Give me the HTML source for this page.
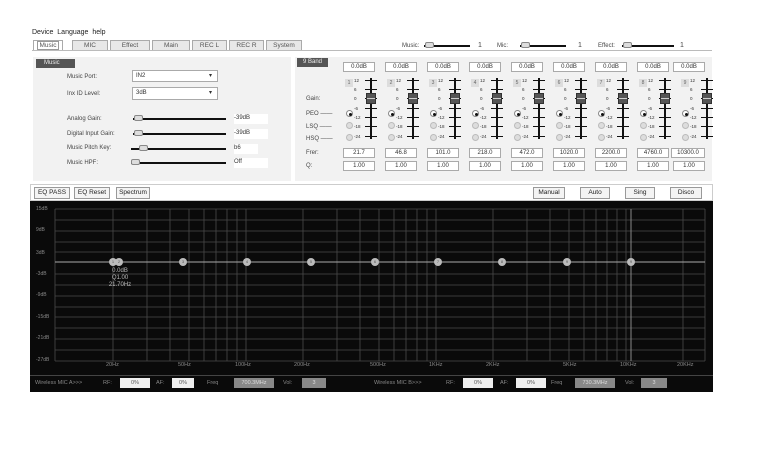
<!DOCTYPE html>
<html><head><meta charset="utf-8"><style>
*{margin:0;padding:0;box-sizing:border-box}
body{width:760px;height:449px;background:#fff;position:relative;overflow:hidden;font-family:"Liberation Sans",sans-serif;font-size:6px;color:#333}
.a{position:absolute}
.box{position:absolute;background:#fff;border:1px solid #aaa;text-align:center;font-size:6px;line-height:8px;color:#333}
.tab{position:absolute;top:40px;height:10px;border:1px solid #aaa;border-bottom:none;background:#e8e8e8;font-size:6.5px;line-height:9px;text-align:center;color:#555}
.hs{position:absolute;height:2px;background:#111}
.hk{position:absolute;width:9px;height:6px;border:1px solid #888;background:#ddd;border-radius:2px}
.col{position:absolute;top:58px;width:42px;height:120px}
.num{position:absolute;left:4px;top:21px;width:8px;height:8px;background:#ddd;font-size:5px;line-height:8px;text-align:center;color:#666}
.bar{position:absolute;left:29px;top:20px;width:2px;height:61px;background:#111}
.tk{position:absolute;left:24px;width:12px;height:1px;background:#111}
.tl{position:absolute;left:13px;font-size:4.5px;color:#333;line-height:5px}
.kn{position:absolute;left:25px;top:35px;width:10px;height:11px;background:#555;border:1px solid #333}
.kn:after{content:"";position:absolute;left:0;right:0;top:4px;height:1px;background:#ccc}
.rd{position:absolute;left:5px;width:7px;height:7px;border-radius:50%;background:#ddd;border:1px solid #bbb}
.rd.on{background:#fff;border-color:#888}
.rd.on:after{content:"";position:absolute;left:1.5px;top:1.5px;width:3px;height:3px;border-radius:50%;background:#111}
.btn{position:absolute;top:187px;height:12px;border:1px solid #999;background:#f4f4f4;font-size:6.5px;line-height:10px;text-align:center;color:#222}
.gl{position:absolute;background:#555}
.yl{position:absolute;left:36px;font-size:5px;color:#888}
.xl{position:absolute;top:362px;font-size:5.5px;color:#888}
.nd{position:absolute;top:258px;width:8px;height:8px;border-radius:50%;background:#bbb;font-size:4px;text-align:center;line-height:8px;color:#555}
.bl{position:absolute;top:380px;font-size:5.5px;color:#888}
.bw{position:absolute;top:378px;height:10px;background:#eee;font-size:5.5px;line-height:10px;text-align:center;color:#555}
.bg{position:absolute;top:378px;height:10px;background:#888;font-size:5.5px;line-height:10px;text-align:center;color:#ddd}
.lb{position:absolute;font-size:6px;color:#444}
</style></head><body>
<div class="a" style="left:32px;top:29px;font-size:7px;color:#222">Device&nbsp; Language&nbsp; help</div>
<div class="a" style="left:32px;top:50px;width:680px;height:1px;background:#bbb"></div>
<div class="tab" style="left:33px;width:30px;background:#fff"><span style="border:1px solid #999;padding:0 2px">Music</span></div>
<div class="tab" style="left:72px;width:36px">MIC</div>
<div class="tab" style="left:110px;width:40px">Effect</div>
<div class="tab" style="left:152px;width:38px">Main</div>
<div class="tab" style="left:192px;width:35px">REC L</div>
<div class="tab" style="left:229px;width:35px">REC R</div>
<div class="tab" style="left:266px;width:36px">System</div>
<div class="lb" style="left:402px;top:43px">Music:</div><div class="hs" style="left:424px;top:45px;width:46px"></div><div class="hk" style="left:425px;top:42px"></div><div class="lb" style="left:478px;top:42px;font-size:7px">1</div>
<div class="lb" style="left:497px;top:43px">Mic:</div><div class="hs" style="left:520px;top:45px;width:46px"></div><div class="hk" style="left:521px;top:42px"></div><div class="lb" style="left:578px;top:42px;font-size:7px">1</div>
<div class="lb" style="left:598px;top:43px">Effect:</div><div class="hs" style="left:622px;top:45px;width:52px"></div><div class="hk" style="left:623px;top:42px"></div><div class="lb" style="left:680px;top:42px;font-size:7px">1</div>

<div class="a" style="left:33px;top:57px;width:258px;height:124px;background:#f2f2f2"></div>
<div class="a" style="left:36px;top:59px;width:39px;height:9px;background:#555;color:#eee;font-size:6px;line-height:9px;padding-left:8px">Music</div>
<div class="lb" style="left:67px;top:74px">Music Port:</div>
<div class="box" style="left:132px;top:70px;width:86px;height:12px;text-align:left;padding-left:3px;line-height:10px">IN2<span style="position:absolute;right:5px">▾</span></div>
<div class="lb" style="left:67px;top:91px">Inx ID Level:</div>
<div class="box" style="left:132px;top:87px;width:86px;height:13px;text-align:left;padding-left:3px;line-height:11px">3dB<span style="position:absolute;right:5px">▾</span></div>
<div class="lb" style="left:67px;top:116px">Analog Gain:</div><div class="hs" style="left:133px;top:118px;width:93px"></div><div class="hk" style="left:134px;top:115px"></div><div class="box" style="left:234px;top:114px;width:34px;height:10px;border:none;text-align:left;background:#fff">-39dB</div>
<div class="lb" style="left:67px;top:131px">Digital Input Gain:</div><div class="hs" style="left:133px;top:133px;width:93px"></div><div class="hk" style="left:134px;top:130px"></div><div class="box" style="left:234px;top:129px;width:34px;height:10px;border:none;text-align:left;background:#fff">-39dB</div>
<div class="lb" style="left:67px;top:145px">Music Pitch Key:</div><div class="hs" style="left:131px;top:148px;width:95px"></div><div class="hk" style="left:139px;top:145px"></div><div class="box" style="left:234px;top:144px;width:24px;height:10px;border:none;text-align:left;background:#fff">b6</div>
<div class="lb" style="left:67px;top:160px">Music HPF:</div><div class="hs" style="left:131px;top:162px;width:95px"></div><div class="hk" style="left:131px;top:159px"></div><div class="box" style="left:234px;top:158px;width:34px;height:10px;border:none;text-align:left;background:#fff">Off</div>

<div class="a" style="left:295px;top:57px;width:417px;height:124px;background:#f2f2f2"></div>
<div class="a" style="left:297px;top:58px;width:31px;height:9px;background:#555;color:#eee;font-size:6px;line-height:9px;text-align:center">9 Band</div>
<div class="lb" style="left:306px;top:96px">Gain:</div>
<div class="lb" style="left:306px;top:111px">PEO ——</div>
<div class="lb" style="left:306px;top:124px">LSQ ——</div>
<div class="lb" style="left:306px;top:136px">HSQ ——</div>
<div class="lb" style="left:306px;top:150px">Frer:</div>
<div class="lb" style="left:306px;top:163px">Q:</div>

<div class="col" style="left:341px"><div class="box" style="left:2px;top:4px;width:32px;height:10px">0.0dB</div><div class="num">1</div><div class="bar"></div><div class="tk" style="top:22px"></div><div class="tk" style="top:31px"></div><div class="tk" style="top:40px"></div><div class="tk" style="top:50px"></div><div class="tk" style="top:59px"></div><div class="tk" style="top:68px"></div><div class="tk" style="top:78px"></div><div class="tl" style="top:20px">12</div><div class="tl" style="top:29px">6</div><div class="tl" style="top:38px">0</div><div class="tl" style="top:48px">-6</div><div class="tl" style="top:57px">-12</div><div class="tl" style="top:66px">-18</div><div class="tl" style="top:76px">-24</div><div class="kn"></div><div class="rd on" style="top:52px"></div><div class="rd" style="top:64px"></div><div class="rd" style="top:76px"></div><div class="box" style="left:2px;top:90px;width:32px;height:10px">21.7</div><div class="box" style="left:2px;top:103px;width:32px;height:10px">1.00</div></div>
<div class="col" style="left:383px"><div class="box" style="left:2px;top:4px;width:32px;height:10px">0.0dB</div><div class="num">2</div><div class="bar"></div><div class="tk" style="top:22px"></div><div class="tk" style="top:31px"></div><div class="tk" style="top:40px"></div><div class="tk" style="top:50px"></div><div class="tk" style="top:59px"></div><div class="tk" style="top:68px"></div><div class="tk" style="top:78px"></div><div class="tl" style="top:20px">12</div><div class="tl" style="top:29px">6</div><div class="tl" style="top:38px">0</div><div class="tl" style="top:48px">-6</div><div class="tl" style="top:57px">-12</div><div class="tl" style="top:66px">-18</div><div class="tl" style="top:76px">-24</div><div class="kn"></div><div class="rd on" style="top:52px"></div><div class="rd" style="top:64px"></div><div class="rd" style="top:76px"></div><div class="box" style="left:2px;top:90px;width:32px;height:10px">46.8</div><div class="box" style="left:2px;top:103px;width:32px;height:10px">1.00</div></div>
<div class="col" style="left:425px"><div class="box" style="left:2px;top:4px;width:32px;height:10px">0.0dB</div><div class="num">3</div><div class="bar"></div><div class="tk" style="top:22px"></div><div class="tk" style="top:31px"></div><div class="tk" style="top:40px"></div><div class="tk" style="top:50px"></div><div class="tk" style="top:59px"></div><div class="tk" style="top:68px"></div><div class="tk" style="top:78px"></div><div class="tl" style="top:20px">12</div><div class="tl" style="top:29px">6</div><div class="tl" style="top:38px">0</div><div class="tl" style="top:48px">-6</div><div class="tl" style="top:57px">-12</div><div class="tl" style="top:66px">-18</div><div class="tl" style="top:76px">-24</div><div class="kn"></div><div class="rd on" style="top:52px"></div><div class="rd" style="top:64px"></div><div class="rd" style="top:76px"></div><div class="box" style="left:2px;top:90px;width:32px;height:10px">101.0</div><div class="box" style="left:2px;top:103px;width:32px;height:10px">1.00</div></div>
<div class="col" style="left:467px"><div class="box" style="left:2px;top:4px;width:32px;height:10px">0.0dB</div><div class="num">4</div><div class="bar"></div><div class="tk" style="top:22px"></div><div class="tk" style="top:31px"></div><div class="tk" style="top:40px"></div><div class="tk" style="top:50px"></div><div class="tk" style="top:59px"></div><div class="tk" style="top:68px"></div><div class="tk" style="top:78px"></div><div class="tl" style="top:20px">12</div><div class="tl" style="top:29px">6</div><div class="tl" style="top:38px">0</div><div class="tl" style="top:48px">-6</div><div class="tl" style="top:57px">-12</div><div class="tl" style="top:66px">-18</div><div class="tl" style="top:76px">-24</div><div class="kn"></div><div class="rd on" style="top:52px"></div><div class="rd" style="top:64px"></div><div class="rd" style="top:76px"></div><div class="box" style="left:2px;top:90px;width:32px;height:10px">218.0</div><div class="box" style="left:2px;top:103px;width:32px;height:10px">1.00</div></div>
<div class="col" style="left:509px"><div class="box" style="left:2px;top:4px;width:32px;height:10px">0.0dB</div><div class="num">5</div><div class="bar"></div><div class="tk" style="top:22px"></div><div class="tk" style="top:31px"></div><div class="tk" style="top:40px"></div><div class="tk" style="top:50px"></div><div class="tk" style="top:59px"></div><div class="tk" style="top:68px"></div><div class="tk" style="top:78px"></div><div class="tl" style="top:20px">12</div><div class="tl" style="top:29px">6</div><div class="tl" style="top:38px">0</div><div class="tl" style="top:48px">-6</div><div class="tl" style="top:57px">-12</div><div class="tl" style="top:66px">-18</div><div class="tl" style="top:76px">-24</div><div class="kn"></div><div class="rd on" style="top:52px"></div><div class="rd" style="top:64px"></div><div class="rd" style="top:76px"></div><div class="box" style="left:2px;top:90px;width:32px;height:10px">472.0</div><div class="box" style="left:2px;top:103px;width:32px;height:10px">1.00</div></div>
<div class="col" style="left:551px"><div class="box" style="left:2px;top:4px;width:32px;height:10px">0.0dB</div><div class="num">6</div><div class="bar"></div><div class="tk" style="top:22px"></div><div class="tk" style="top:31px"></div><div class="tk" style="top:40px"></div><div class="tk" style="top:50px"></div><div class="tk" style="top:59px"></div><div class="tk" style="top:68px"></div><div class="tk" style="top:78px"></div><div class="tl" style="top:20px">12</div><div class="tl" style="top:29px">6</div><div class="tl" style="top:38px">0</div><div class="tl" style="top:48px">-6</div><div class="tl" style="top:57px">-12</div><div class="tl" style="top:66px">-18</div><div class="tl" style="top:76px">-24</div><div class="kn"></div><div class="rd on" style="top:52px"></div><div class="rd" style="top:64px"></div><div class="rd" style="top:76px"></div><div class="box" style="left:2px;top:90px;width:32px;height:10px">1020.0</div><div class="box" style="left:2px;top:103px;width:32px;height:10px">1.00</div></div>
<div class="col" style="left:593px"><div class="box" style="left:2px;top:4px;width:32px;height:10px">0.0dB</div><div class="num">7</div><div class="bar"></div><div class="tk" style="top:22px"></div><div class="tk" style="top:31px"></div><div class="tk" style="top:40px"></div><div class="tk" style="top:50px"></div><div class="tk" style="top:59px"></div><div class="tk" style="top:68px"></div><div class="tk" style="top:78px"></div><div class="tl" style="top:20px">12</div><div class="tl" style="top:29px">6</div><div class="tl" style="top:38px">0</div><div class="tl" style="top:48px">-6</div><div class="tl" style="top:57px">-12</div><div class="tl" style="top:66px">-18</div><div class="tl" style="top:76px">-24</div><div class="kn"></div><div class="rd on" style="top:52px"></div><div class="rd" style="top:64px"></div><div class="rd" style="top:76px"></div><div class="box" style="left:2px;top:90px;width:32px;height:10px">2200.0</div><div class="box" style="left:2px;top:103px;width:32px;height:10px">1.00</div></div>
<div class="col" style="left:635px"><div class="box" style="left:2px;top:4px;width:32px;height:10px">0.0dB</div><div class="num">8</div><div class="bar"></div><div class="tk" style="top:22px"></div><div class="tk" style="top:31px"></div><div class="tk" style="top:40px"></div><div class="tk" style="top:50px"></div><div class="tk" style="top:59px"></div><div class="tk" style="top:68px"></div><div class="tk" style="top:78px"></div><div class="tl" style="top:20px">12</div><div class="tl" style="top:29px">6</div><div class="tl" style="top:38px">0</div><div class="tl" style="top:48px">-6</div><div class="tl" style="top:57px">-12</div><div class="tl" style="top:66px">-18</div><div class="tl" style="top:76px">-24</div><div class="kn"></div><div class="rd on" style="top:52px"></div><div class="rd" style="top:64px"></div><div class="rd" style="top:76px"></div><div class="box" style="left:2px;top:90px;width:32px;height:10px">4760.0</div><div class="box" style="left:2px;top:103px;width:32px;height:10px">1.00</div></div>
<div class="col" style="left:677px"><div class="box" style="left:-4px;top:4px;width:32px;height:10px">0.0dB</div><div class="num">9</div><div class="bar"></div><div class="tk" style="top:22px"></div><div class="tk" style="top:31px"></div><div class="tk" style="top:40px"></div><div class="tk" style="top:50px"></div><div class="tk" style="top:59px"></div><div class="tk" style="top:68px"></div><div class="tk" style="top:78px"></div><div class="tl" style="top:20px">12</div><div class="tl" style="top:29px">6</div><div class="tl" style="top:38px">0</div><div class="tl" style="top:48px">-6</div><div class="tl" style="top:57px">-12</div><div class="tl" style="top:66px">-18</div><div class="tl" style="top:76px">-24</div><div class="kn"></div><div class="rd on" style="top:52px"></div><div class="rd" style="top:64px"></div><div class="rd" style="top:76px"></div><div class="box" style="left:-6px;top:90px;width:34px;height:10px">10300.0</div><div class="box" style="left:-4px;top:103px;width:32px;height:10px">1.00</div></div>

<div class="a" style="left:30px;top:184px;width:683px;height:17px;border:1px solid #ccc;background:#fff"></div>
<div class="btn" style="left:34px;width:36px">EQ PASS</div>
<div class="btn" style="left:74px;width:36px">EQ Reset</div>
<div class="btn" style="left:116px;width:34px">Spectrum</div>
<div class="btn" style="left:533px;width:32px">Manual</div>
<div class="btn" style="left:580px;width:30px">Auto</div>
<div class="btn" style="left:625px;width:30px">Sing</div>
<div class="btn" style="left:670px;width:32px">Disco</div>

<div class="a" style="left:30px;top:201px;width:683px;height:191px;background:#0a0a0a"></div>
<svg class="a" style="left:0;top:0" width="760" height="449">
<g stroke="#4a4a4a" stroke-width="0.8">
<line x1="55" y1="209" x2="705" y2="209"/><line x1="55" y1="220" x2="705" y2="220"/><line x1="55" y1="231" x2="705" y2="231"/><line x1="55" y1="242" x2="705" y2="242"/><line x1="55" y1="252" x2="705" y2="252"/><line x1="55" y1="274" x2="705" y2="274"/><line x1="55" y1="285" x2="705" y2="285"/><line x1="55" y1="296" x2="705" y2="296"/><line x1="55" y1="307" x2="705" y2="307"/><line x1="55" y1="317" x2="705" y2="317"/><line x1="55" y1="328" x2="705" y2="328"/><line x1="55" y1="339" x2="705" y2="339"/><line x1="55" y1="350" x2="705" y2="350"/><line x1="55" y1="361" x2="705" y2="361"/>
<line x1="55" y1="209" x2="55" y2="361"/><line x1="705" y1="209" x2="705" y2="361"/>
<line x1="113" y1="209" x2="113" y2="361"/><line x1="147" y1="209" x2="147" y2="361"/><line x1="170" y1="209" x2="170" y2="361"/><line x1="189" y1="209" x2="189" y2="361"/><line x1="204" y1="209" x2="204" y2="361"/><line x1="216" y1="209" x2="216" y2="361"/><line x1="227" y1="209" x2="227" y2="361"/><line x1="237" y1="209" x2="237" y2="361"/><line x1="246" y1="209" x2="246" y2="361"/>
<line x1="303" y1="209" x2="303" y2="361"/><line x1="337" y1="209" x2="337" y2="361"/><line x1="360" y1="209" x2="360" y2="361"/><line x1="379" y1="209" x2="379" y2="361"/><line x1="394" y1="209" x2="394" y2="361"/><line x1="406" y1="209" x2="406" y2="361"/><line x1="417" y1="209" x2="417" y2="361"/><line x1="427" y1="209" x2="427" y2="361"/><line x1="436" y1="209" x2="436" y2="361"/>
<line x1="493" y1="209" x2="493" y2="361"/><line x1="527" y1="209" x2="527" y2="361"/><line x1="550" y1="209" x2="550" y2="361"/><line x1="569" y1="209" x2="569" y2="361"/><line x1="584" y1="209" x2="584" y2="361"/><line x1="596" y1="209" x2="596" y2="361"/><line x1="607" y1="209" x2="607" y2="361"/><line x1="617" y1="209" x2="617" y2="361"/><line x1="626" y1="209" x2="626" y2="361"/><line x1="683" y1="209" x2="683" y2="361"/>
</g>
<line x1="55" y1="262" x2="705" y2="262" stroke="#aaa" stroke-width="1"/>
<line x1="631" y1="209" x2="631" y2="361" stroke="#888" stroke-width="1"/>
</svg>
<div class="yl" style="top:206px">15dB</div><div class="yl" style="top:227px">9dB</div><div class="yl" style="top:250px">3dB</div><div class="yl" style="top:271px">-3dB</div><div class="yl" style="top:292px">-9dB</div><div class="yl" style="top:314px">-15dB</div><div class="yl" style="top:335px">-21dB</div><div class="yl" style="top:357px">-27dB</div>
<div class="xl" style="left:106px">20Hz</div><div class="xl" style="left:178px">50Hz</div><div class="xl" style="left:235px">100Hz</div><div class="xl" style="left:294px">200Hz</div><div class="xl" style="left:370px">500Hz</div><div class="xl" style="left:429px">1KHz</div><div class="xl" style="left:486px">2KHz</div><div class="xl" style="left:563px">5KHz</div><div class="xl" style="left:620px">10KHz</div><div class="xl" style="left:677px">20KHz</div>
<div class="nd" style="left:109px">1</div><div class="nd" style="left:115px">2</div><div class="nd" style="left:179px">3</div><div class="nd" style="left:243px">4</div><div class="nd" style="left:307px">5</div><div class="nd" style="left:371px">6</div><div class="nd" style="left:434px">7</div><div class="nd" style="left:498px">8</div><div class="nd" style="left:563px">9</div><div class="nd" style="left:627px">9</div>
<div class="a" style="left:104px;top:268px;font-size:6px;line-height:7px;color:#bbb;text-align:center;width:32px">0.0dB<br>Q1.00<br>21.70Hz</div>

<div class="a" style="left:30px;top:375px;width:683px;height:1px;background:#444"></div>
<div class="bl" style="left:35px">Wireless MIC A&gt;&gt;&gt;</div><div class="bl" style="left:103px">RF:</div><div class="bw" style="left:120px;width:30px">0%</div><div class="bl" style="left:156px">AF:</div><div class="bw" style="left:172px;width:22px">0%</div><div class="bl" style="left:207px">Freq</div><div class="bg" style="left:234px;width:40px">700.3MHz</div><div class="bl" style="left:283px">Vol:</div><div class="bg" style="left:302px;width:24px">3</div>
<div class="bl" style="left:374px">Wireless MIC B&gt;&gt;&gt;</div><div class="bl" style="left:446px">RF:</div><div class="bw" style="left:463px;width:30px">0%</div><div class="bl" style="left:500px">AF:</div><div class="bw" style="left:516px;width:30px">0%</div><div class="bl" style="left:551px">Freq</div><div class="bg" style="left:575px;width:40px">730.3MHz</div><div class="bl" style="left:625px">Vol:</div><div class="bg" style="left:641px;width:26px">3</div>
</body></html>
